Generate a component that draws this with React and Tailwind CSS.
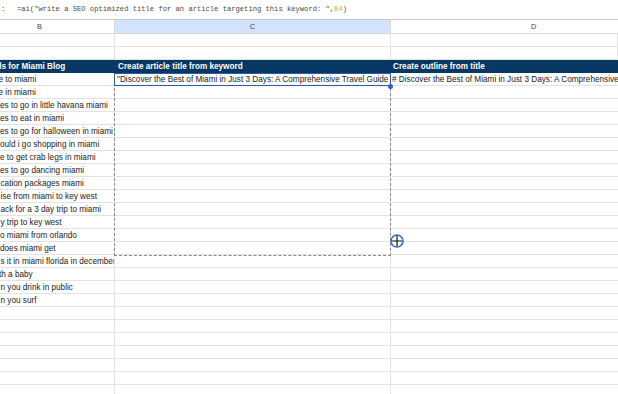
import React from 'react';

const keywords = [
  { text: 'e to miami', cls: '-ml-[1.5px]' },
  { text: 'e in miami', cls: '-ml-[1.5px]' },
  { text: 'es to go in little havana miami', cls: 'ml-0' },
  { text: 'es to eat in miami', cls: 'ml-0' },
  { text: 'es to go for halloween in miami', cls: 'ml-0' },
  { text: 'ould i go shopping in miami', cls: 'ml-0' },
  { text: 'e to get crab legs in miami', cls: 'ml-0' },
  { text: 'es to go dancing miami', cls: 'ml-0' },
  { text: 'cation packages miami', cls: 'ml-[0.5px]' },
  { text: 'ise from miami to key west', cls: 'ml-[0.5px]' },
  { text: 'ack for a 3 day trip to miami', cls: 'ml-[0.5px]' },
  { text: 'y trip to key west', cls: 'ml-[0.5px]' },
  { text: 'o miami from orlando', cls: 'ml-0' },
  { text: 'does miami get', cls: 'ml-0' },
  { text: 's it in miami florida in december', cls: 'ml-[0.5px]' },
  { text: 'th a baby', cls: '-ml-[1px]' },
  { text: 'n you drink in public', cls: 'ml-[0.5px]' },
  { text: 'n you surf', cls: 'ml-[0.5px]' },
];

const cell = 'h-[13px] border-b border-r border-[#e3e3e3] overflow-hidden whitespace-nowrap';
const txt = 'block text-[8.2px] leading-[10px] pt-[1.5px] text-[#222]';
const head = 'block text-[8.2px] leading-[13px] font-bold text-white';

const Cursor = () => (
  <svg width="16" height="16" viewBox="0 0 16 16" className="absolute left-[389px] top-[233px]">
    <circle cx="8" cy="8" r="6" fill="white" stroke="#3a6bd0" strokeWidth="1.6" />
    <path d="M8 2.8V13.2M2.8 8H13.2" stroke="#111" strokeWidth="1.2" />
  </svg>
);

export default function App() {
  const blanks = Array.from({ length: 7 });
  return (
    <div className="relative w-[618px] h-[394px] overflow-hidden bg-white font-['Liberation_Sans',Arial,sans-serif]">
      {/* formula bar */}
      <div className="h-[20px] border-b border-[#c8c8c8] flex items-center font-['Liberation_Mono',monospace] text-[7.15px] text-[#4a4a4a]">
        <span className="ml-[1px] w-[16px]">:</span>
        <span>
          =ai("write a SEO optimized title for an article targeting this keyword: ",<span className="text-[#e0a458]">B4</span>)
        </span>
      </div>

      {/* column letters */}
      <div className="grid grid-cols-[115px_276px_1fr] text-[7.5px] text-[#444]">
        <div className="h-[14px] border-b border-r border-[#d9d9d9] pl-[37px] leading-[13px]">B</div>
        <div className="h-[14px] border-b border-r border-[#d9d9d9] bg-[#d3e3fd] text-center leading-[13px]">C</div>
        <div className="h-[14px] border-b border-[#d9d9d9] pl-[140px] leading-[13px]">D</div>
      </div>

      <div className="relative grid grid-cols-[115px_276px_1fr]">
        {/* two blank rows */}
        {[0, 1].map((i) => (
          <React.Fragment key={`top-${i}`}>
            <div className={cell} />
            <div className={cell} />
            <div className={cell} />
          </React.Fragment>
        ))}

        {/* dark header row */}
        <div className="h-[13px] bg-[#073763] overflow-hidden whitespace-nowrap">
          <span className={`${head} -ml-[3.5px]`}>ds for Miami Blog</span>
        </div>
        <div className="h-[13px] bg-[#073763] overflow-hidden whitespace-nowrap pl-[3px]">
          <span className={head}>Create article title from keyword</span>
        </div>
        <div className="h-[13px] bg-[#073763] overflow-hidden whitespace-nowrap pl-[2px]">
          <span className={head}>Create outline from title</span>
        </div>

        {/* data rows */}
        {keywords.map((k, i) => (
          <React.Fragment key={i}>
            <div className={cell}>
              <span className={`${txt} ${k.cls}`}>{k.text}</span>
            </div>
            <div className={`${cell} pl-[2px]`}>
              {i === 0 && (
                <span className={txt}>"Discover the Best of Miami in Just 3 Days: A Comprehensive Travel Guide</span>
              )}
            </div>
            <div className="h-[13px] border-b border-[#e3e3e3] overflow-hidden whitespace-nowrap pl-[1px]">
              {i === 0 && (
                <span className={txt}># Discover the Best of Miami in Just 3 Days: A Comprehensive Travel Guide</span>
              )}
            </div>
          </React.Fragment>
        ))}

        {blanks.map((_, i) => (
          <React.Fragment key={`b-${i}`}>
            <div className={cell} />
            <div className={cell} />
            <div className="h-[13px] border-b border-[#e3e3e3]" />
          </React.Fragment>
        ))}

        {/* copy range (dashed) */}
        <div className="absolute left-[114px] top-[39px] w-[277px] h-[183px] border border-dashed border-[#8a8a8a] pointer-events-none" />
        {/* selected cell */}
        <div className="absolute left-[114px] top-[39px] w-[277px] h-[13px] border border-[#2a5aa8] pointer-events-none" />
        <div className="absolute left-[388px] top-[49.5px] w-[5px] h-[5px] rounded-full bg-[#2a62c8]" />
      </div>

      <Cursor />
    </div>
  );
}
